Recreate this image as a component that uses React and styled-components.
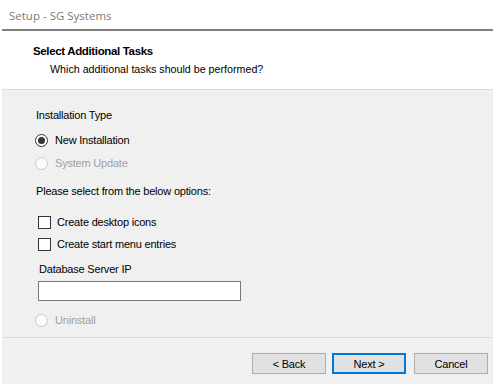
import React from "react";
import styled, { createGlobalStyle } from "styled-components";

const Global = createGlobalStyle`
  html, body { margin: 0; padding: 0; background: #ffffff; }
  body { font-family: "Liberation Sans", Arial, sans-serif; }
  * { box-sizing: border-box; }
`;

const Window = styled.div`
  margin-left: 2px;
  width: 491px;
  height: 384px;
  display: flex;
  flex-direction: column;
  background: #ffffff;
`;

const TitleBar = styled.div`
  height: 31px;
  display: flex;
  align-items: center;
  padding-left: 7px;
  padding-top: 1px;
  font-family: "Open Sans", "Liberation Sans", sans-serif;
  font-size: 11.5px;
  color: #7b7b7b;
  border-bottom: 2px solid #7f7f7f;
`;

const Header = styled.div`
  height: 59px;
  background: #ffffff;
  border-bottom: 1px solid #dadada;
  padding: 12px 0 0 31px;
`;

const HeaderTitle = styled.div`
  font-family: "Liberation Sans", Arial, sans-serif;
  font-weight: bold;
  font-size: 11.5px;
  letter-spacing: -0.35px;
  color: #000;
  line-height: 16px;
`;

const HeaderSub = styled.div`
  font-family: "Liberation Sans", Arial, sans-serif;
  font-size: 10.7px;
  color: #000;
  line-height: 15px;
  margin-top: 3px;
  padding-left: 17px;
`;

const Body = styled.div`
  flex: 1;
  background: #f0f0f0;
  border-bottom: 1px solid #dadada;
  padding: 17px 0 0 33px;
  display: flex;
  flex-direction: column;
  font-family: "Liberation Sans", Arial, sans-serif;
  font-size: 11px;
  letter-spacing: -0.2px;
  color: #000;
`;

const Label = styled.div`
  line-height: 16px;
  margin-top: ${(p) => p.$mt || 0}px;
  padding-left: ${(p) => p.$pl || 0}px;
`;

const OptionRow = styled.div`
  display: flex;
  align-items: center;
  height: 20px;
  gap: ${(p) => p.$gap}px;
  margin-top: ${(p) => p.$mt || 0}px;
  padding-left: ${(p) => p.$pl || 0}px;
  color: ${(p) => (p.$disabled ? "#a0a0a0" : "#000")};
`;

const Radio = styled.span`
  width: 13px;
  height: 13px;
  border-radius: 50%;
  border: 1px solid ${(p) => (p.$disabled ? "#cccccc" : "#333333")};
  background: ${(p) => (p.$disabled ? "#fbfbfb" : "#ffffff")};
  display: flex;
  align-items: center;
  justify-content: center;
  flex: none;
  &::after {
    content: "";
    display: ${(p) => (p.$checked ? "block" : "none")};
    width: 7px;
    height: 7px;
    border-radius: 50%;
    background: #333333;
  }
`;

const Checkbox = styled.span`
  width: 13px;
  height: 13px;
  border: 1px solid #333333;
  background: #ffffff;
  flex: none;
`;

const TextInput = styled.input`
  margin-top: 4px;
  margin-left: 3px;
  width: 203px;
  height: 20px;
  border: 1px solid #7a7a7a;
  background: #ffffff;
  outline: none;
  padding: 0 3px;
  font: inherit;
`;

const Footer = styled.div`
  height: 46px;
  background: #f0f0f0;
  display: flex;
  justify-content: flex-end;
  align-items: flex-start;
  padding: 15px 5px 0 0;
  gap: 6px;
`;

const Button = styled.button`
  width: 74px;
  height: 21px;
  margin-left: ${(p) => p.$ml || 0}px;
  background: #e1e1e1;
  border: ${(p) => (p.$primary ? "2px solid #0078d7" : "1px solid #adadad")};
  font-family: "Liberation Sans", Arial, sans-serif;
  font-size: 11px;
  letter-spacing: -0.2px;
  color: #000;
  padding: 0;
  display: flex;
  align-items: center;
  justify-content: center;
`;

export default function App() {
  return (
    <>
      <Global />
      <Window>
        <TitleBar>Setup - SG Systems</TitleBar>
        <Header>
          <HeaderTitle>Select Additional Tasks</HeaderTitle>
          <HeaderSub>Which additional tasks should be performed?</HeaderSub>
        </Header>
        <Body>
          <Label $pl={1}>Installation Type</Label>
          <OptionRow $mt={7} $gap={7}>
            <Radio $checked />
            New Installation
          </OptionRow>
          <OptionRow $mt={3} $gap={7} $disabled>
            <Radio $disabled />
            System Update
          </OptionRow>
          <Label $mt={10} $pl={1}>Please select from the below options:</Label>
          <OptionRow $mt={13} $gap={6} $pl={3}>
            <Checkbox />
            Create desktop icons
          </OptionRow>
          <OptionRow $mt={2} $gap={6} $pl={3}>
            <Checkbox />
            Create start menu entries
          </OptionRow>
          <Label $mt={7} $pl={4}>Database Server IP</Label>
          <TextInput type="text" />
          <OptionRow $mt={9} $gap={7} $disabled>
            <Radio $disabled />
            Uninstall
          </OptionRow>
        </Body>
        <Footer>
          <Button>&lt; Back</Button>
          <Button $primary>Next &gt;</Button>
          <Button $ml={2}>Cancel</Button>
        </Footer>
      </Window>
    </>
  );
}
